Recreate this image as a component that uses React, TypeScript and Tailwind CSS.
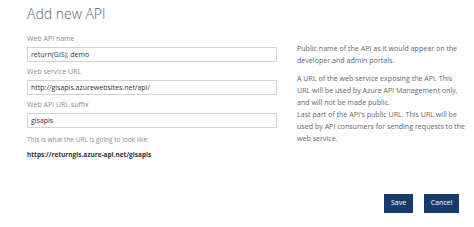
export default function App() {
  const fields = [
    { label: "Web API name", value: "return(GiS); demo" },
    { label: "Web service URL", value: "http://gisapis.azurewebsites.net/api/" },
    { label: "Web API URL suffix", value: "gisapis" },
  ];

  // descriptions keep the same line breaks as the portal
  const notes = [
    { lines: ["Public name of the API as it would appear on the", "developer and admin portals."], gap: true },
    {
      lines: [
        "A URL of the web service exposing the API. This",
        "URL will be used by Azure API Management only,",
        "and will not be made public.",
      ],
      gap: false,
    },
    {
      lines: [
        "Last part of the API's public URL. This URL will be",
        "used by API consumers for sending requests to the",
        "web service.",
      ],
      gap: false,
    },
  ];

  return (
    <div className="w-[474px] h-[227px] bg-white text-[#555] font-['Open_Sans',sans-serif] overflow-hidden">
      <div className="flex">
        {/* form */}
        <div className="w-[297px] pl-[27px] pr-[20px]">
          <h1 className="pt-[4px] text-[14px] font-light leading-[20px] text-[#5d6670]">Add new API</h1>
          <div className="mt-[10px] flex flex-col gap-[5px]">
            {fields.map((f) => (
              <div key={f.label}>
                <label className="block text-[7px] leading-[10px] text-[#8c8c8c]">{f.label}</label>
                <input
                  readOnly
                  value={f.value}
                  className="mt-[3px] block w-full h-[15px] px-[3px] border border-[#d2d2d2] text-[7px] text-[#333] outline-none"
                />
              </div>
            ))}
          </div>
          <p className="mt-[7px] text-[6.5px] leading-[10px] text-[#8c8c8c]">This is what the URL is going to look like:</p>
          <p className="mt-[5px] text-[6.5px] leading-[10px] font-bold text-[#333]">https://returngis.azure-api.net/gisapis</p>
        </div>

        {/* descriptions */}
        <div className="pt-[42px] text-[7.1px] leading-[12px] text-[#666] whitespace-nowrap">
          {notes.map((n, i) => (
            <p key={i} className={n.gap ? "mb-[6px]" : ""}>
              {n.lines.map((l) => (
                <span key={l} className="block">{l}</span>
              ))}
            </p>
          ))}
        </div>
      </div>

      <div className="mt-[34px] flex justify-end gap-[11px] pr-[15px]">
        <button className="w-[29px] h-[19px] bg-[#173b6c] text-white text-[7px]">Save</button>
        <button className="w-[35px] h-[19px] bg-[#173b6c] text-white text-[7px]">Cancel</button>
      </div>
    </div>
  );
}
